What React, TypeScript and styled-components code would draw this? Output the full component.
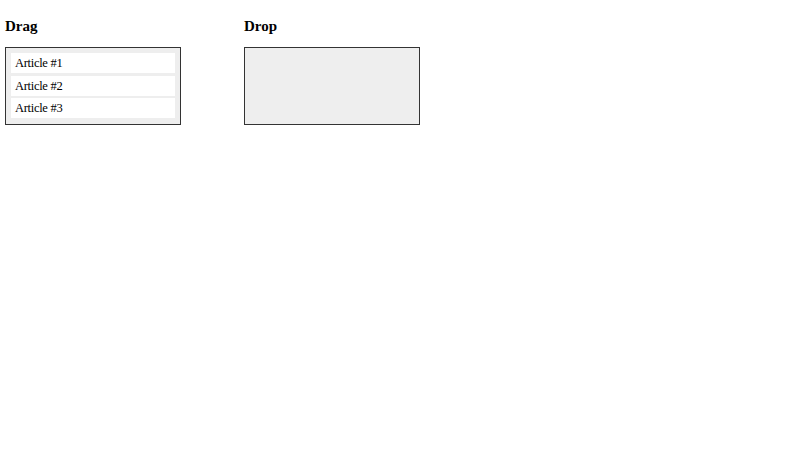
import React from "react";
import styled, { createGlobalStyle } from "styled-components";

const GlobalStyle = createGlobalStyle`
  body {
    margin: 0;
    padding: 5px;
    background: #fff;
    font-family: "Liberation Serif", "Times New Roman", serif;
    color: #000;
  }
`;

const Board = styled.div`
  display: flex;
  gap: 63px;
  align-items: flex-start;
`;

const Column = styled.section`
  width: 176px;
`;

const Title = styled.h3`
  margin: 10px 0 10px;
  font-size: 15px;
  line-height: 22px;
  font-weight: bold;
`;

const Zone = styled.div`
  box-sizing: border-box;
  border: 1px solid #333;
  background: #eee;
  padding: 5px 5px 6px;
  min-height: 78px;
  display: flex;
  flex-direction: column;
  gap: 2.5px;
`;

const Item = styled.div`
  background: #fff;
  height: 20px;
  line-height: 20px;
  padding: 0 4px;
  font-size: 12.5px;
  letter-spacing: -0.3px;
`;

const articles = ["Article #1", "Article #2", "Article #3"];

const App = () => (
  <>
    <GlobalStyle />
    <Board>
      <Column>
        <Title>Drag</Title>
        <Zone>
          {articles.map((a) => (
            <Item key={a}>{a}</Item>
          ))}
        </Zone>
      </Column>
      <Column>
        <Title>Drop</Title>
        <Zone />
      </Column>
    </Board>
  </>
);

export default App;
